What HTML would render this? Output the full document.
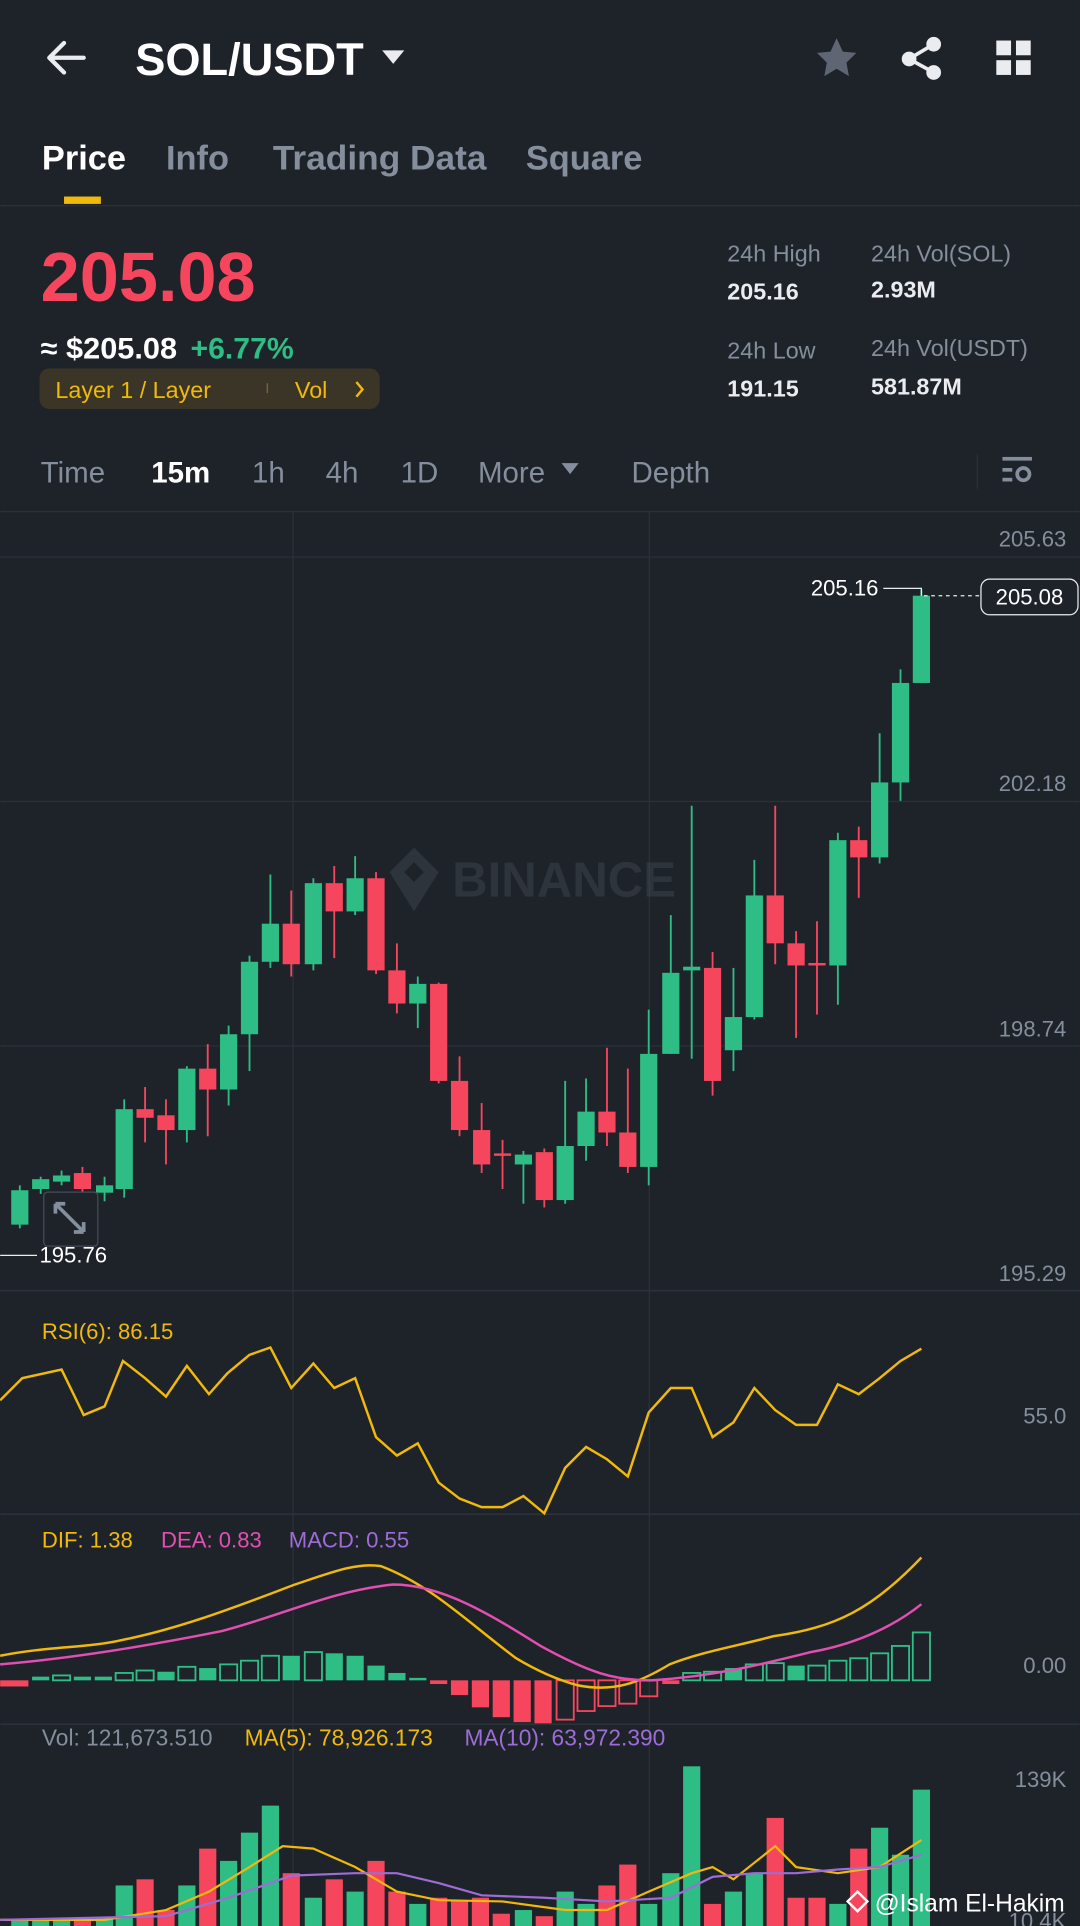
<!DOCTYPE html>
<html><head><meta charset="utf-8"><style>
html,body{margin:0;padding:0;background:#1e2329;}
svg{display:block;}
text{font-family:"Liberation Sans",sans-serif;}
</style></head><body>
<svg width="1080" height="1926" viewBox="0 0 879 1568" xmlns="http://www.w3.org/2000/svg">
<rect width="879" height="1568" fill="#1e2329"/>
<!-- header -->
<path d="M40 47 H68 M40 47 L52 35 M40 47 L52 59" stroke="#eaecef" stroke-width="3.5" fill="none" stroke-linecap="round"/>
<text x="110" y="61" font-size="37" font-weight="bold" fill="#fff" textLength="186" lengthAdjust="spacingAndGlyphs">SOL/USDT</text>
<path d="M311 41 L329 41 L320 52 Z" fill="#eaecef"/>
<path d="M681 31 L686 42 L697 43 L689 51 L691 62 L681 56 L671 62 L673 51 L665 43 L676 42 Z" fill="#5e6673"/>
<circle cx="760" cy="36" r="6" fill="#eaecef"/><circle cx="740" cy="48" r="6" fill="#eaecef"/><circle cx="760" cy="59" r="6" fill="#eaecef"/>
<path d="M760 36 L740 48 L760 59" stroke="#eaecef" stroke-width="3" fill="none"/>
<rect x="811" y="33" width="12" height="12" fill="#eaecef"/><rect x="827" y="33" width="12" height="12" fill="#eaecef"/>
<rect x="811" y="49" width="12" height="12" fill="#eaecef"/><rect x="827" y="49" width="12" height="12" fill="#eaecef"/>
<!-- tabs -->
<text x="34" y="138" font-size="28" font-weight="bold" fill="#fff">Price</text>
<text x="135" y="138" font-size="28" font-weight="bold" fill="#848e9c">Info</text>
<text x="222" y="138" font-size="28" font-weight="bold" fill="#848e9c" textLength="174" lengthAdjust="spacingAndGlyphs">Trading Data</text>
<text x="428" y="138" font-size="28" font-weight="bold" fill="#848e9c">Square</text>
<rect x="52" y="160" width="30" height="6" fill="#f0b90b"/>
<rect x="0" y="167" width="879" height="1" fill="#2b3139"/>
<!-- price -->
<text x="33" y="245" font-size="57" font-weight="bold" fill="#f6465d" textLength="175" lengthAdjust="spacingAndGlyphs">205.08</text>
<text x="33" y="292" font-size="24" font-weight="bold" fill="#fff" textLength="111" lengthAdjust="spacingAndGlyphs">≈ $205.08</text>
<text x="155" y="292" font-size="24" font-weight="bold" fill="#2ebd85" textLength="84" lengthAdjust="spacingAndGlyphs">+6.77%</text>
<rect x="32" y="300" width="277" height="33" rx="8" fill="#3a3526"/>
<text x="45" y="324" font-size="19" fill="#f0b90b">Layer 1 / Layer</text>
<rect x="217" y="312" width="1" height="8" fill="#7a6a3a"/>
<text x="240" y="324" font-size="19" fill="#f0b90b">Vol</text>
<path d="M290 311 L295 317 L290 323" stroke="#f0b90b" stroke-width="2" fill="none"/>
<text x="592" y="213" font-size="19" fill="#848e9c">24h High</text>
<text x="592" y="244" font-size="19" font-weight="bold" fill="#eaecef">205.16</text>
<text x="709" y="213" font-size="19" fill="#848e9c">24h Vol(SOL)</text>
<text x="709" y="242" font-size="19" font-weight="bold" fill="#eaecef">2.93M</text>
<text x="592" y="292" font-size="19" fill="#848e9c">24h Low</text>
<text x="592" y="323" font-size="19" font-weight="bold" fill="#eaecef">191.15</text>
<text x="709" y="290" font-size="19" fill="#848e9c">24h Vol(USDT)</text>
<text x="709" y="321" font-size="19" font-weight="bold" fill="#eaecef">581.87M</text>
<!-- intervals -->
<g font-size="24" fill="#848e9c">
<text x="33" y="393">Time</text>
<text x="123" y="393" fill="#fff" font-weight="bold">15m</text>
<text x="205" y="393">1h</text>
<text x="265" y="393">4h</text>
<text x="326" y="393">1D</text>
<text x="389" y="393">More</text>
<text x="514" y="393">Depth</text>
</g>
<path d="M457 377 L471 377 L464 386 Z" fill="#848e9c"/>
<rect x="795" y="370" width="1" height="28" fill="#2b3139"/>
<rect x="816" y="372" width="24" height="3" fill="#848e9c"/>
<rect x="816" y="381" width="8" height="3" fill="#848e9c"/><rect x="816" y="389" width="8" height="3" fill="#848e9c"/>
<circle cx="833" cy="386" r="5" stroke="#848e9c" stroke-width="3" fill="none"/>
<rect x="0" y="416" width="879" height="1" fill="#2b3139"/>
<!-- grid -->
<g fill="#2b3139">
<rect x="0" y="453" width="879" height="1"/><rect x="0" y="652" width="879" height="1"/>
<rect x="0" y="851" width="879" height="1"/><rect x="0" y="1050" width="879" height="1.5"/>
<rect x="0" y="1232" width="879" height="1.5"/><rect x="0" y="1403" width="879" height="1.5"/>
<rect x="238" y="417" width="1" height="1151"/><rect x="528" y="417" width="1" height="1151"/>
</g>
<g font-size="18" fill="#848e9c" text-anchor="end">
<text x="868" y="445">205.63</text><text x="868" y="644">202.18</text>
<text x="868" y="844">198.74</text><text x="868" y="1043">195.29</text>
<text x="868" y="1159">55.0</text><text x="868" y="1362">0.00</text>
<text x="868" y="1455">139K</text><text x="868" y="1570">10.4K</text>
</g>
<!-- watermark -->
<g opacity="0.25" fill="#5e6673">
<path d="M337 690 L357 710 L337 742 L317 710 Z M337 702 L345 710 L337 718 L329 710Z" fill-rule="evenodd"/>
<text x="368" y="730" font-size="40" font-weight="bold">BINANCE</text>
</g>
<!-- candles -->
<g id="c">
<g fill="#2ebd85" stroke="#2ebd85" stroke-width="1.5">
<line x1="16" y1="965" x2="16" y2="1000"/><rect x="9" y="969" width="14" height="28" stroke="none"/>
<line x1="33" y1="958" x2="33" y2="972"/><rect x="26" y="960" width="14" height="8" stroke="none"/>
<line x1="50" y1="953" x2="50" y2="965"/><rect x="43" y="957" width="14" height="5" stroke="none"/>
<line x1="85" y1="958" x2="85" y2="978"/><rect x="78" y="965" width="14" height="6" stroke="none"/>
<line x1="101" y1="895" x2="101" y2="975"/><rect x="94" y="903" width="14" height="65" stroke="none"/>
<line x1="152" y1="868" x2="152" y2="930"/><rect x="145" y="870" width="14" height="50" stroke="none"/>
<line x1="186" y1="835" x2="186" y2="900"/><rect x="179" y="842" width="14" height="45" stroke="none"/>
<line x1="203" y1="778" x2="203" y2="872"/><rect x="196" y="783" width="14" height="59" stroke="none"/>
<line x1="220" y1="712" x2="220" y2="788"/><rect x="213" y="752" width="14" height="31" stroke="none"/>
<line x1="255" y1="715" x2="255" y2="790"/><rect x="248" y="719" width="14" height="66" stroke="none"/>
<line x1="289" y1="697" x2="289" y2="745"/><rect x="282" y="715" width="14" height="27" stroke="none"/>
<line x1="340" y1="795" x2="340" y2="837"/><rect x="333" y="801" width="14" height="16" stroke="none"/>
<line x1="426" y1="937" x2="426" y2="980"/><rect x="419" y="940" width="14" height="8" stroke="none"/>
<line x1="460" y1="880" x2="460" y2="980"/><rect x="453" y="933" width="14" height="44" stroke="none"/>
<line x1="477" y1="878" x2="477" y2="945"/><rect x="470" y="905" width="14" height="28" stroke="none"/>
<line x1="528" y1="822" x2="528" y2="965"/><rect x="521" y="858" width="14" height="92" stroke="none"/>
<line x1="546" y1="745" x2="546" y2="858"/><rect x="539" y="792" width="14" height="66" stroke="none"/>
<line x1="563" y1="656" x2="563" y2="862"/><rect x="556" y="787" width="14" height="3" stroke="none"/>
<line x1="597" y1="788" x2="597" y2="872"/><rect x="590" y="828" width="14" height="27" stroke="none"/>
<line x1="614" y1="700" x2="614" y2="830"/><rect x="607" y="729" width="14" height="99" stroke="none"/>
<line x1="682" y1="678" x2="682" y2="818"/><rect x="675" y="684" width="14" height="102" stroke="none"/>
<line x1="716" y1="597" x2="716" y2="703"/><rect x="709" y="637" width="14" height="61" stroke="none"/>
<line x1="733" y1="545" x2="733" y2="652"/><rect x="726" y="556" width="14" height="81" stroke="none"/>
<line x1="750" y1="480" x2="750" y2="556"/><rect x="743" y="485" width="14" height="71" stroke="none"/>
</g>
<g fill="#f6465d" stroke="#f6465d" stroke-width="1.5">
<line x1="67" y1="950" x2="67" y2="970"/><rect x="60" y="955" width="14" height="13" stroke="none"/>
<line x1="118" y1="885" x2="118" y2="930"/><rect x="111" y="903" width="14" height="7" stroke="none"/>
<line x1="135" y1="895" x2="135" y2="948"/><rect x="128" y="908" width="14" height="12" stroke="none"/>
<line x1="169" y1="850" x2="169" y2="925"/><rect x="162" y="870" width="14" height="17" stroke="none"/>
<line x1="237" y1="725" x2="237" y2="795"/><rect x="230" y="752" width="14" height="33" stroke="none"/>
<line x1="272" y1="705" x2="272" y2="780"/><rect x="265" y="719" width="14" height="23" stroke="none"/>
<line x1="306" y1="710" x2="306" y2="793"/><rect x="299" y="715" width="14" height="75" stroke="none"/>
<line x1="323" y1="768" x2="323" y2="825"/><rect x="316" y="790" width="14" height="27" stroke="none"/>
<line x1="357" y1="800" x2="357" y2="882"/><rect x="350" y="801" width="14" height="79" stroke="none"/>
<line x1="374" y1="860" x2="374" y2="925"/><rect x="367" y="880" width="14" height="40" stroke="none"/>
<line x1="392" y1="898" x2="392" y2="955"/><rect x="385" y="920" width="14" height="28" stroke="none"/>
<line x1="409" y1="928" x2="409" y2="968"/><rect x="402" y="939" width="14" height="2" stroke="none"/>
<line x1="443" y1="935" x2="443" y2="983"/><rect x="436" y="938" width="14" height="39" stroke="none"/>
<line x1="494" y1="853" x2="494" y2="933"/><rect x="487" y="905" width="14" height="17" stroke="none"/>
<line x1="511" y1="870" x2="511" y2="955"/><rect x="504" y="922" width="14" height="28" stroke="none"/>
<line x1="580" y1="775" x2="580" y2="892"/><rect x="573" y="788" width="14" height="92" stroke="none"/>
<line x1="631" y1="656" x2="631" y2="785"/><rect x="624" y="729" width="14" height="39" stroke="none"/>
<line x1="648" y1="758" x2="648" y2="845"/><rect x="641" y="768" width="14" height="18" stroke="none"/>
<line x1="665" y1="750" x2="665" y2="826"/><rect x="658" y="784" width="14" height="2" stroke="none"/>
<line x1="699" y1="673" x2="699" y2="731"/><rect x="692" y="684" width="14" height="14" stroke="none"/>
</g>
</g>
<!-- price markers -->
<text x="660" y="485" font-size="18" fill="#fff">205.16</text>
<path d="M719 479 H750 V485" stroke="#eaecef" stroke-width="1" fill="none"/>
<path d="M752 485 H798" stroke="#eaecef" stroke-width="1" stroke-dasharray="3,3"/>
<rect x="798.5" y="471.5" width="79" height="29" rx="7" fill="#1e2329" stroke="#eaecef" stroke-width="1"/>
<text x="838" y="492" font-size="18" fill="#fff" text-anchor="middle">205.08</text>
<path d="M0 1022 H30" stroke="#eaecef" stroke-width="1"/>
<text x="32" y="1028" font-size="18" fill="#fff">195.76</text>
<rect x="35.5" y="970.5" width="44" height="44" rx="3" fill="none" stroke="#474d57"/>
<path d="M45 980 L68 1003 M45 980 L45 988 M45 980 L53 980 M68 1003 L60 1003 M68 1003 L68 995" stroke="#848e9c" stroke-width="3" fill="none"/>
<!-- RSI -->
<text x="34" y="1090" font-size="18" fill="#f0b90b">RSI(6): 86.15</text>
<polyline fill="none" stroke="#f0b90b" stroke-width="2" points="0,1140 18,1122 50,1115 68,1152 85,1145 100,1108 118,1122 135,1137 152,1112 170,1135 185,1118 203,1103 220,1097 237,1130 255,1110 272,1130 289,1122 306,1170 323,1185 340,1175 357,1207 374,1220 392,1227 409,1227 426,1218 443,1232 460,1195 477,1178 494,1188 511,1202 528,1150 546,1130 563,1130 580,1170 597,1158 614,1130 631,1148 648,1160 665,1160 682,1127 699,1135 716,1122 733,1108 750,1098"/>
<!-- MACD -->
<text x="34" y="1260" font-size="18" fill="#f0b90b">DIF: 1.38</text>
<text x="131" y="1260" font-size="18" fill="#e24fb0">DEA: 0.83</text>
<text x="235" y="1260" font-size="18" fill="#9d6cd6">MACD: 0.55</text>
<g fill="#2ebd85">
<rect x="26" y="1365" width="14" height="3"/><rect x="60" y="1365" width="14" height="3"/><rect x="77" y="1365" width="14" height="3"/>
<rect x="128" y="1361" width="14" height="7"/><rect x="162" y="1358" width="14" height="10"/><rect x="230" y="1348" width="14" height="20"/>
<rect x="265" y="1346" width="14" height="22"/><rect x="282" y="1348" width="14" height="20"/><rect x="299" y="1356" width="14" height="12"/>
<rect x="316" y="1362" width="14" height="6"/><rect x="333" y="1366" width="14" height="2"/>
<rect x="590" y="1358" width="14" height="10"/><rect x="641" y="1356" width="14" height="12"/>
</g>
<g fill="none" stroke="#2ebd85" stroke-width="1.5">
<rect x="43" y="1364" width="14" height="4"/><rect x="94" y="1362" width="14" height="6"/><rect x="111" y="1360" width="14" height="8"/>
<rect x="145" y="1357" width="14" height="11"/><rect x="179" y="1355" width="14" height="13"/><rect x="196" y="1352" width="14" height="16"/>
<rect x="213" y="1348" width="14" height="20"/><rect x="248" y="1345" width="14" height="23"/>
<rect x="556" y="1362" width="14" height="6"/><rect x="573" y="1361" width="14" height="7"/><rect x="607" y="1355" width="14" height="13"/>
<rect x="624" y="1354" width="14" height="14"/><rect x="658" y="1356" width="14" height="12"/><rect x="675" y="1352" width="14" height="16"/>
<rect x="692" y="1350" width="14" height="18"/><rect x="709" y="1346" width="14" height="22"/><rect x="726" y="1340" width="14" height="28"/>
<rect x="743" y="1329" width="14" height="39"/>
</g>
<g fill="#f6465d">
<rect x="0" y="1368" width="23" height="5"/><rect x="350" y="1368" width="14" height="3"/><rect x="367" y="1368" width="14" height="12"/>
<rect x="384" y="1368" width="14" height="22"/><rect x="401" y="1368" width="14" height="30"/><rect x="418" y="1368" width="14" height="34"/>
<rect x="435" y="1368" width="14" height="35"/><rect x="539" y="1368" width="14" height="3"/>
</g>
<g fill="none" stroke="#f6465d" stroke-width="1.5">
<rect x="453" y="1368" width="14" height="32"/><rect x="470" y="1368" width="14" height="25"/><rect x="487" y="1368" width="14" height="21"/>
<rect x="504" y="1368" width="14" height="19"/><rect x="521" y="1368" width="14" height="13"/>
</g>
<path d="M0 1348 C40 1340 70 1342 100 1335 C150 1325 200 1305 240 1290 C270 1280 290 1272 310 1275 C350 1290 380 1320 420 1350 C440 1362 455 1368 470 1372 C500 1378 520 1370 545 1355 C570 1345 600 1340 630 1332 C680 1325 710 1310 750 1268" fill="none" stroke="#f0b90b" stroke-width="2"/>
<path d="M0 1355 C60 1350 120 1340 180 1328 C230 1315 270 1295 320 1290 C360 1290 400 1315 440 1340 C480 1362 500 1368 530 1368 C580 1365 620 1355 660 1345 C700 1338 730 1322 750 1306" fill="none" stroke="#e24fb0" stroke-width="2"/>
<!-- Volume -->
<text x="34" y="1421" font-size="18.5" fill="#848e9c">Vol: 121,673.510</text>
<text x="199" y="1421" font-size="18.5" fill="#f0b90b">MA(5): 78,926.173</text>
<text x="378" y="1421" font-size="18.5" fill="#9d6cd6">MA(10): 63,972.390</text>
<g fill="#2ebd85">
<rect x="9" y="1562" width="14" height="6"/><rect x="26" y="1563" width="14" height="5"/><rect x="43" y="1563" width="14" height="5"/>
<rect x="78" y="1562" width="14" height="6"/><rect x="94" y="1535" width="14" height="33"/><rect x="145" y="1535" width="14" height="33"/>
<rect x="179" y="1515" width="14" height="53"/><rect x="196" y="1492" width="14" height="76"/><rect x="213" y="1470" width="14" height="98"/>
<rect x="248" y="1545" width="14" height="23"/><rect x="282" y="1540" width="14" height="28"/><rect x="333" y="1550" width="14" height="18"/>
<rect x="419" y="1555" width="14" height="13"/><rect x="453" y="1540" width="14" height="28"/><rect x="470" y="1550" width="14" height="18"/>
<rect x="521" y="1550" width="14" height="18"/><rect x="539" y="1525" width="14" height="43"/><rect x="556" y="1438" width="14" height="130"/>
<rect x="590" y="1540" width="14" height="28"/><rect x="607" y="1525" width="14" height="43"/><rect x="675" y="1550" width="14" height="18"/>
<rect x="709" y="1488" width="14" height="80"/><rect x="726" y="1510" width="14" height="58"/><rect x="743" y="1457" width="14" height="111"/>
</g>
<g fill="#f6465d">
<rect x="60" y="1562" width="14" height="6"/><rect x="111" y="1530" width="14" height="38"/><rect x="128" y="1555" width="14" height="13"/>
<rect x="162" y="1505" width="14" height="63"/><rect x="230" y="1525" width="14" height="43"/><rect x="265" y="1530" width="14" height="38"/>
<rect x="299" y="1515" width="14" height="53"/><rect x="316" y="1540" width="14" height="28"/><rect x="350" y="1545" width="14" height="23"/>
<rect x="367" y="1548" width="14" height="20"/><rect x="384" y="1545" width="14" height="23"/><rect x="401" y="1558" width="14" height="10"/>
<rect x="436" y="1560" width="14" height="8"/><rect x="487" y="1535" width="14" height="33"/><rect x="504" y="1518" width="14" height="50"/>
<rect x="573" y="1550" width="14" height="18"/><rect x="624" y="1480" width="14" height="88"/><rect x="641" y="1545" width="14" height="23"/>
<rect x="658" y="1545" width="14" height="23"/><rect x="692" y="1505" width="14" height="63"/>
</g>
<polyline fill="none" stroke="#f0b90b" stroke-width="1.8" points="0,1563 85,1563 135,1555 170,1540 203,1520 230,1503 255,1505 289,1520 323,1540 357,1547 409,1548 460,1555 494,1555 528,1540 563,1525 580,1520 597,1530 631,1503 648,1520 682,1525 716,1520 750,1498"/>
<polyline fill="none" stroke="#9d6cd6" stroke-width="1.8" points="0,1563 135,1560 186,1545 237,1527 289,1525 323,1525 357,1533 392,1543 443,1545 494,1548 546,1545 580,1528 614,1525 648,1525 682,1522 716,1520 750,1510"/>
<!-- credit -->
<path d="M698 1540 L706 1548 L698 1556 L690 1548 Z" fill="none" stroke="#fff" stroke-width="2"/>
<text x="712" y="1556" font-size="20" fill="#fff">@Islam El-Hakim</text>
</svg>
</body></html>
